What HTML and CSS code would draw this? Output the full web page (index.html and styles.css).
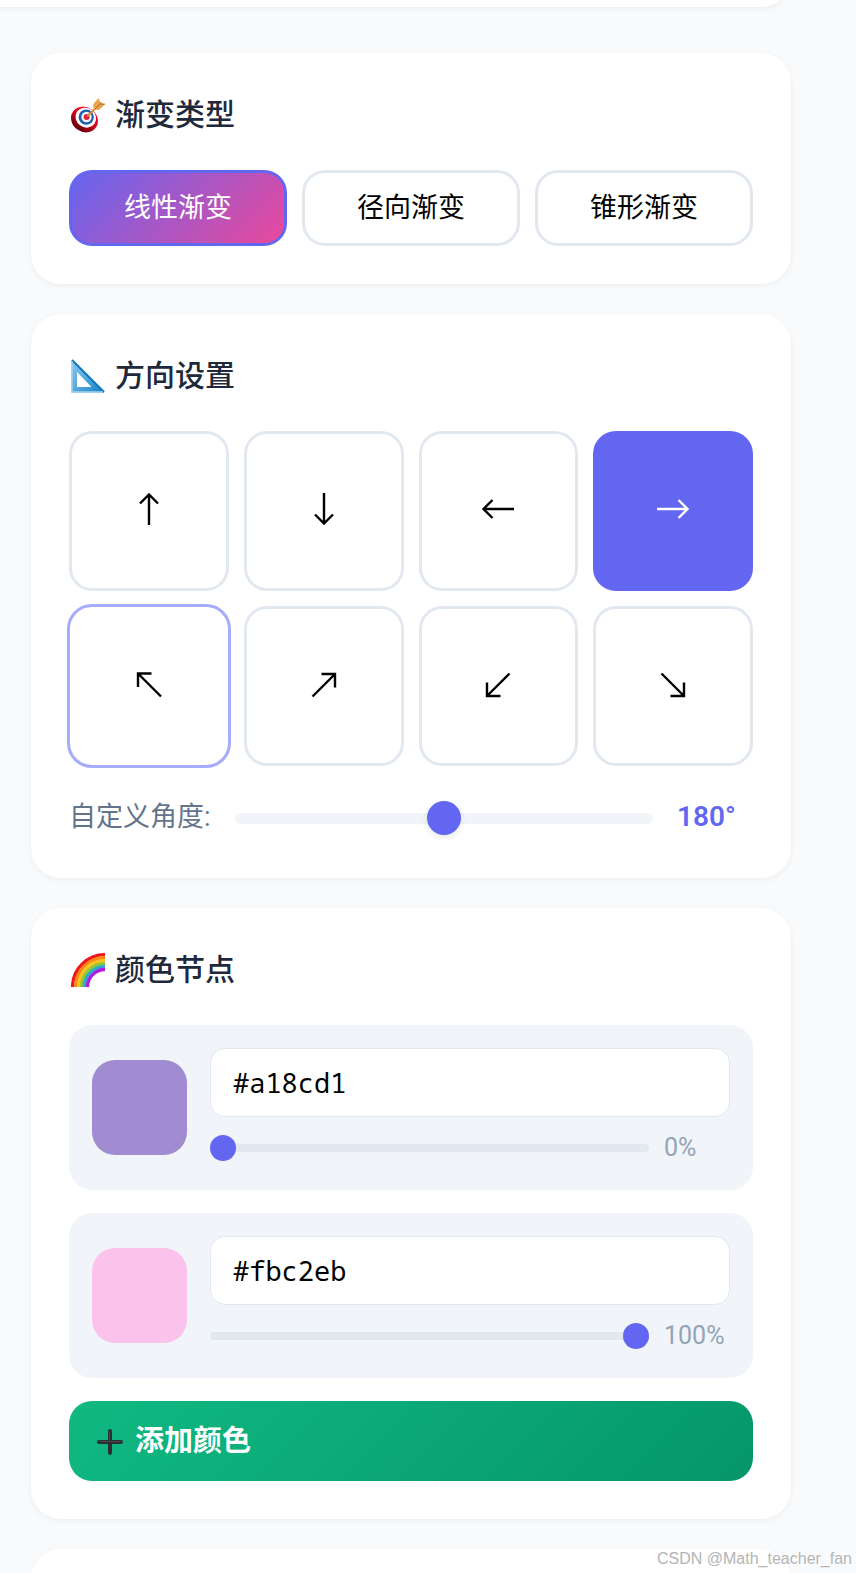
FILE: index.html
```html
<!DOCTYPE html>
<html lang="zh-CN">
<head>
<meta charset="utf-8">
<meta name="viewport" content="width=device-width, initial-scale=1">
<title>渐变生成器</title>
<link rel="stylesheet" href="styles.css">
</head>
<body>
<main class="app">
  <div class="card preview"></div>

  <section class="card">
    <h2 class="title">
      <svg class="emoji" viewBox="0 0 34 36" aria-hidden="true">
        <defs>
          <linearGradient id="rim" x1="0" y1="0" x2="0" y2="1"><stop offset="0" stop-color="#f5112c"/><stop offset=".55" stop-color="#c8031b"/><stop offset="1" stop-color="#5c0008"/></linearGradient>
        </defs>
        <ellipse cx="13.500" cy="22.500" rx="14" ry="12.300" fill="url(#rim)" transform="rotate(35 13.500 22.500)"/>
        <ellipse cx="14.800" cy="20.700" rx="10.600" ry="9.600" fill="#fff" transform="rotate(35 14.800 20.700)"/>
        <circle cx="15.200" cy="20.200" r="7.600" fill="#1b5fae"/>
        <circle cx="15.500" cy="20" r="5.200" fill="#f2f6fb"/>
        <circle cx="15.600" cy="19.900" r="3" fill="#dc2238"/>
        <path d="M16 19.500 26 10" stroke="#d7893a" stroke-width="2"/>
        <path d="M22 7.500 27.500 1 29 5 34 7 28 13 23 12.500Z" fill="#eda54d"/>
        <path d="m24 12 6-6" stroke="#a9601f" stroke-width="1"/>
        <path d="m29 5 1.500 3 3.500-1" fill="none" stroke="#b97a3a" stroke-width="1"/>
      </svg>
      <span>渐变类型</span>
    </h2>
    <div class="types">
      <button class="type active" type="button">线性渐变</button>
      <button class="type" type="button">径向渐变</button>
      <button class="type" type="button">锥形渐变</button>
    </div>
  </section>

  <section class="card">
    <h2 class="title">
      <svg class="emoji" viewBox="0 0 34 36" aria-hidden="true">
        <defs>
          <linearGradient id="ruler" x1="0" y1="0" x2="1" y2="1"><stop offset="0" stop-color="#8cc8ec"/><stop offset=".5" stop-color="#55a9df"/><stop offset="1" stop-color="#1580c4"/></linearGradient>
        </defs>
        <path fill-rule="evenodd" d="M.500 1.500 33.500 34.500H.500ZM6 14v15h14.500Z" fill="url(#ruler)"/>
        <path d="M1 2 33 34" stroke="#0d78bb" stroke-width="2"/>
        <path d="M1 3v31h31" fill="none" stroke="#a5d2ee" stroke-width="1.400"/>
      </svg>
      <span>方向设置</span>
    </h2>
    <div class="directions">
      <button class="direction" type="button" aria-label="向上"><svg class="arrow" viewBox="0 0 32 32"><path d="M16 32V1.500M7 10.500l9-9 9 9"/></svg></button>
      <button class="direction" type="button" aria-label="向下"><svg class="arrow" viewBox="0 0 32 32"><path d="M16 0v30.500M7 21.500l9 9 9-9"/></svg></button>
      <button class="direction" type="button" aria-label="向左"><svg class="arrow" viewBox="0 0 32 32"><path d="M32 16H1.500M10.500 7l-9 9 9 9"/></svg></button>
      <button class="direction active" type="button" aria-label="向右"><svg class="arrow" viewBox="0 0 32 32"><path d="M0 16h30.500M21.500 7l9 9-9 9"/></svg></button>
      <button class="direction focused" type="button" aria-label="左上"><svg class="arrow" viewBox="0 0 32 32"><path d="M28 28.500 5 5.500M5 19V5.500h13.500"/></svg></button>
      <button class="direction" type="button" aria-label="右上"><svg class="arrow" viewBox="0 0 32 32"><path d="M4.500 28.500 27 6M13.500 6H27v13.500"/></svg></button>
      <button class="direction" type="button" aria-label="左下"><svg class="arrow" viewBox="0 0 32 32"><path d="M27.500 5.500 5 28M5 14.500V28h13.500"/></svg></button>
      <button class="direction" type="button" aria-label="右下"><svg class="arrow" viewBox="0 0 32 32"><path d="M4.500 5.500 27 28M27 14.500V28H13.500"/></svg></button>
    </div>
    <div class="angle">
      <label class="angle-label" for="angle">自定义角度:</label>
      <input class="angle-range" id="angle" type="range" min="0" max="360" value="180">
      <output class="angle-value" for="angle">180°</output>
    </div>
  </section>

  <section class="card">
    <h2 class="title">
      <svg class="emoji" viewBox="0 0 34 36" aria-hidden="true">
        <g fill="none" stroke-width="3.400">
          <path d="M1.600 35A32.400 32.400 0 0 1 34 2.600" stroke="#f0161b"/>
          <path d="M4.700 35A29.300 29.300 0 0 1 34 5.700" stroke="#fb8a12"/>
          <path d="M7.700 35A26.300 26.300 0 0 1 34 8.700" stroke="#fcc324"/>
          <path d="M10.600 35A23.400 23.400 0 0 1 34 11.600" stroke="#8fc634"/>
          <path d="M13.500 35A20.500 20.500 0 0 1 34 14.500" stroke="#2fa7d0"/>
          <path d="M16.500 35A17.500 17.500 0 0 1 34 17.500" stroke="#b01be0"/>
        </g>
      </svg>
      <span>颜色节点</span>
    </h2>
    <div class="stops">
      <div class="stop">
        <input class="swatch" type="color" value="#a18cd1" aria-label="颜色 1">
        <div class="stop-fields">
          <input class="hex" type="text" value="#a18cd1" aria-label="色值 1">
          <div class="position">
            <input class="position-range" id="position-1" type="range" min="0" max="100" value="0" aria-label="位置 1">
            <output class="position-value" for="position-1">0%</output>
          </div>
        </div>
      </div>
      <div class="stop">
        <input class="swatch" type="color" value="#fbc2eb" aria-label="颜色 2">
        <div class="stop-fields">
          <input class="hex" type="text" value="#fbc2eb" aria-label="色值 2">
          <div class="position">
            <input class="position-range" id="position-2" type="range" min="0" max="100" value="100" aria-label="位置 2">
            <output class="position-value" for="position-2">100%</output>
          </div>
        </div>
      </div>
      <button class="add" type="button">
        <svg class="plus" viewBox="0 0 26 26" aria-hidden="true">
          <path d="M13 2v22M2 13h22" stroke="#2b2f33" stroke-width="4" stroke-linecap="round"/>
          <path d="M12.500 2.500v9.500M2.500 12.500h21" stroke="#464b50" stroke-width="1" stroke-linecap="round"/>
        </svg>
        <span>添加颜色</span>
      </button>
    </div>
  </section>

  <div class="next">
    <div class="card"></div>
  </div>
</main>
<div class="watermark">CSDN @Math_teacher_fan</div>
</body>
</html>
```

FILE: styles.css
```css
* {
  box-sizing: border-box;
}

body {
  margin: 0;
  position: relative;
  overflow-x: hidden;
  background: #f8fafc;
  color: #1e293b;
  font-family: Roboto, "Noto Sans CJK SC", sans-serif;
  font-size: 27px;
  line-height: 43px;
}

button,
input {
  margin: 0;
  font: inherit;
}

.app {
  display: flex;
  flex-direction: column;
  gap: 30px;
  padding: 0 65px 0 31px;
}

.card {
  padding: 38px;
  border-radius: 30px;
  background: #fff;
  box-shadow: 0 2px 6px rgba(0, 0, 0, 0.05);
}

.preview {
  margin: -69px 0 16px -70px;
}

.title {
  display: flex;
  align-items: center;
  gap: 10px;
  margin: 0 0 31px;
  padding-left: 2px;
  font-size: 30px;
  font-weight: 500;
  line-height: 48px;
}

.emoji {
  width: 34px;
  height: 36px;
}

.types {
  display: grid;
  grid-template-columns: repeat(3, 1fr);
  gap: 15px;
}

.type {
  height: 76px;
  padding: 0;
  border: 3px solid #e2e8f0;
  border-radius: 23px;
  background: #fff;
  color: #000;
}

.type.active {
  border-color: #6366f1;
  background: linear-gradient(135deg, #6366f1, #ec4899) border-box;
  color: #fff;
}

.directions {
  display: grid;
  grid-template-columns: repeat(4, 1fr);
  gap: 15px;
}

.direction {
  display: flex;
  align-items: center;
  justify-content: center;
  aspect-ratio: 1;
  padding: 0 0 4px;
  border: 3px solid #e2e8f0;
  border-radius: 23px;
  background: #fff;
  color: #000;
}

.direction.active {
  border-color: #6366f1;
  background: #6366f1;
  color: #fff;
}

.direction.focused {
  border-color: transparent;
  outline: 3px solid #a5acfa;
  outline-offset: -1px;
}

.arrow {
  width: 32px;
  height: 32px;
  fill: none;
  stroke: currentColor;
  stroke-width: 2.4;
}

.angle {
  display: flex;
  align-items: center;
  gap: 24px;
  margin-top: 31px;
}

.angle-label,
.angle-value {
  padding-bottom: 3px;
  line-height: 40px;
}

.angle-label {
  color: #64748b;
}

.angle-range,
.position-range {
  flex: 1;
  min-width: 0;
  appearance: none;
}

.angle-range {
  height: 11px;
  border-radius: 6px;
  background: #f1f5f9;
}

.angle-range::-webkit-slider-thumb {
  appearance: none;
  width: 34px;
  height: 34px;
  border-radius: 50%;
  background: #6366f1;
  box-shadow: 0 2px 6px rgba(0, 0, 0, 0.1);
}

.angle-value {
  min-width: 76px;
  color: #6366f1;
  font-size: 28px;
  font-weight: 600;
}

.stops {
  display: grid;
  gap: 23px;
}

.stop {
  display: flex;
  align-items: center;
  gap: 23px;
  padding: 23px;
  border-radius: 23px;
  background: #f1f5f9;
}

.swatch {
  flex: none;
  width: 95px;
  height: 95px;
  padding: 0;
  border: 0;
  border-radius: 23px;
  background: none;
  appearance: none;
  overflow: hidden;
}

.swatch::-webkit-color-swatch-wrapper {
  padding: 0;
}

.swatch::-webkit-color-swatch {
  border: 0;
}

.stop-fields {
  flex: 1;
  min-width: 0;
  display: grid;
  gap: 12px;
}

.hex {
  width: 100%;
  height: 69px;
  padding: 0 22px;
  border: 1px solid #e2e8f0;
  border-radius: 15px;
  background: #fff;
  color: #000;
  font-family: "Noto Sans Mono", "Droid Sans Mono", "DejaVu Sans Mono", monospace;
}

.position {
  display: flex;
  align-items: center;
  gap: 15px;
}

.position-range {
  height: 8px;
  border-radius: 4px;
  background: #e2e8f0;
}

.position-range::-webkit-slider-thumb {
  appearance: none;
  width: 26px;
  height: 26px;
  border-radius: 50%;
  background: #6366f1;
}

.position-value {
  min-width: 66px;
  color: #94a3b8;
  font-size: 25px;
  line-height: 38px;
}

.add {
  display: flex;
  align-items: center;
  gap: 12px;
  height: 80px;
  padding: 2px 28px 0;
  border: 0;
  border-radius: 23px;
  background: linear-gradient(135deg, #10b981, #059669);
  color: #fff;
  font-size: 29px;
  font-weight: 600;
}

.plus {
  width: 26px;
  height: 26px;
}

.next {
  height: 24px;
  overflow: hidden;
}

.watermark {
  position: absolute;
  right: 4px;
  bottom: 4px;
  color: #b4b4b4;
  font-family: "Liberation Sans", sans-serif;
  font-size: 16px;
  line-height: 20px;
  text-shadow: 1px 1px 1px #fff, -1px -1px 1px #fff;
}
```
